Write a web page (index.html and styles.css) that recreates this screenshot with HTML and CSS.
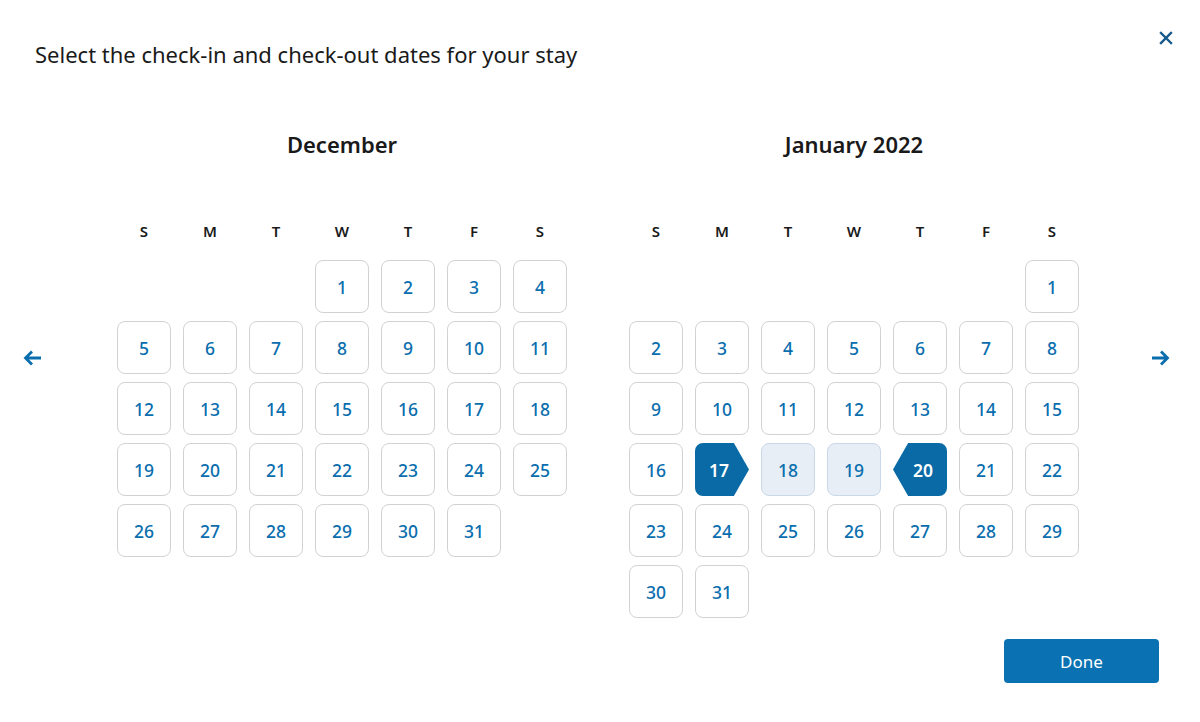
FILE: index.html
```html
<!DOCTYPE html>
<html lang="en">
<head>
    <meta charset="UTF-8">
    <meta name="viewport" content="width=device-width, initial-scale=1.0">
    <title>Select dates</title>
    <link rel="stylesheet" href="styles.css">
</head>
<body>
    <div class="dialog" role="dialog" aria-labelledby="dlg-title">
        <div class="dialog-head">
            <h1 id="dlg-title" class="dialog-title">Select the check-in and check-out dates for your stay</h1>
            <button class="close" aria-label="Close">
                <svg width="14" height="14" viewBox="0 0 14 14"><path d="M2 2 L12 12 M12 2 L2 12" stroke="#17598a" stroke-width="2.4" fill="none" stroke-linecap="square"/></svg>
            </button>
        </div>

        <div class="calendars">
            <button class="nav nav-prev" aria-label="Previous month">
                <svg width="22" height="22" viewBox="0 0 22 22"><path d="M19 11 H4 M10 4.5 L3.5 11 L10 17.5" stroke="#0a6eae" stroke-width="2.8" fill="none"/></svg>
            </button>

            <div class="month">
                <h2 class="month-title">December</h2>
                <div class="weekdays">
                    <span>S</span><span>M</span><span>T</span><span>W</span><span>T</span><span>F</span><span>S</span>
                </div>
                <div class="days">
                    <span class="blank"></span><span class="blank"></span><span class="blank"></span>
                    <button class="day">1</button><button class="day">2</button><button class="day">3</button><button class="day">4</button>
                    <button class="day">5</button><button class="day">6</button><button class="day">7</button><button class="day">8</button><button class="day">9</button><button class="day">10</button><button class="day">11</button>
                    <button class="day">12</button><button class="day">13</button><button class="day">14</button><button class="day">15</button><button class="day">16</button><button class="day">17</button><button class="day">18</button>
                    <button class="day">19</button><button class="day">20</button><button class="day">21</button><button class="day">22</button><button class="day">23</button><button class="day">24</button><button class="day">25</button>
                    <button class="day">26</button><button class="day">27</button><button class="day">28</button><button class="day">29</button><button class="day">30</button><button class="day">31</button>
                </div>
            </div>

            <div class="month">
                <h2 class="month-title">January 2022</h2>
                <div class="weekdays">
                    <span>S</span><span>M</span><span>T</span><span>W</span><span>T</span><span>F</span><span>S</span>
                </div>
                <div class="days">
                    <span class="blank"></span><span class="blank"></span><span class="blank"></span><span class="blank"></span><span class="blank"></span><span class="blank"></span>
                    <button class="day">1</button>
                    <button class="day">2</button><button class="day">3</button><button class="day">4</button><button class="day">5</button><button class="day">6</button><button class="day">7</button><button class="day">8</button>
                    <button class="day">9</button><button class="day">10</button><button class="day">11</button><button class="day">12</button><button class="day">13</button><button class="day">14</button><button class="day">15</button>
                    <button class="day">16</button><button class="day check-in">17</button><button class="day in-range">18</button><button class="day in-range">19</button><button class="day check-out">20</button><button class="day">21</button><button class="day">22</button>
                    <button class="day">23</button><button class="day">24</button><button class="day">25</button><button class="day">26</button><button class="day">27</button><button class="day">28</button><button class="day">29</button>
                    <button class="day">30</button><button class="day">31</button>
                </div>
            </div>

            <button class="nav nav-next" aria-label="Next month">
                <svg width="22" height="22" viewBox="0 0 22 22"><path d="M3 11 H18 M12 4.5 L18.5 11 L12 17.5" stroke="#0a6eae" stroke-width="2.8" fill="none"/></svg>
            </button>
        </div>

        <div class="dialog-foot">
            <button class="done">Done</button>
        </div>
    </div>
</body>
</html>
```

FILE: styles.css
```css
* {
    box-sizing: border-box;
}

body {
    margin: 0;
    background: #fff;
    color: #1a1a1a;
    font-family: "Noto Sans", "Open Sans", sans-serif;
}

button {
    font-family: inherit;
    cursor: pointer;
}

.dialog {
    width: 1200px;
    height: 722px;
}

.dialog-head {
    display: flex;
    justify-content: space-between;
    align-items: flex-start;
    padding: 40px 19px 0 35px;
}

.dialog-title {
    margin: 0;
    font-size: 22px;
    line-height: 28px;
    font-weight: 400;
    color: #1a1a1a;
}

.close {
    width: 30px;
    height: 30px;
    margin-top: -17px;
    padding: 0;
    border: 0;
    background: none;
    display: flex;
    align-items: center;
    justify-content: center;
}

.calendars {
    display: flex;
    align-items: flex-start;
    margin-top: 62px;
}

.nav {
    width: 48px;
    height: 48px;
    padding: 0;
    border: 0;
    background: none;
    display: flex;
    align-items: center;
    justify-content: center;
    margin-top: 204px;
}

.nav-prev {
    margin-left: 9px;
    margin-right: 60px;
}

.nav-next {
    margin-left: 57px;
}

.month + .month {
    margin-left: 62px;
}

.month {
    width: 450px;
}

.month-title {
    margin: 0;
    text-align: center;
    font-size: 22px;
    line-height: 28px;
    font-weight: 600;
    color: #1a1a1a;
}

.weekdays {
    display: grid;
    grid-template-columns: repeat(7, 54px);
    column-gap: 12px;
    margin-top: 63px;
    font-size: 15px;
    line-height: 20px;
    font-weight: 600;
    text-align: center;
}

.days {
    display: grid;
    grid-template-columns: repeat(7, 54px);
    grid-auto-rows: 53px;
    column-gap: 12px;
    row-gap: 8px;
    margin-top: 19px;
}

.day {
    padding: 0;
    border: 1px solid #d2d2d2;
    border-radius: 8px;
    background: #fff;
    color: #0a6eae;
    font-size: 17.5px;
    font-weight: 500;
}

.day.in-range {
    background: #e7eef5;
    border-color: #c8d8e8;
}

.day.check-in,
.day.check-out {
    border: 0;
    color: #fff;
    font-weight: 600;
    background: #0a6aa6;
}

.day.check-in {
    border-radius: 8px 4px 4px 8px;
    clip-path: polygon(0 0, 72% 0, 100% 50%, 72% 100%, 0 100%);
    padding-right: 6px;
}

.day.check-out {
    border-radius: 4px 8px 8px 4px;
    clip-path: polygon(28% 0, 100% 0, 100% 100%, 28% 100%, 0 50%);
    padding-left: 6px;
}

.dialog-foot {
    display: flex;
    justify-content: flex-end;
    padding-right: 41px;
    margin-top: 21px;
}

.done {
    width: 155px;
    height: 44px;
    border: 0;
    border-radius: 4px;
    background: #0a72b2;
    color: #fff;
    font-size: 17px;
}
```
